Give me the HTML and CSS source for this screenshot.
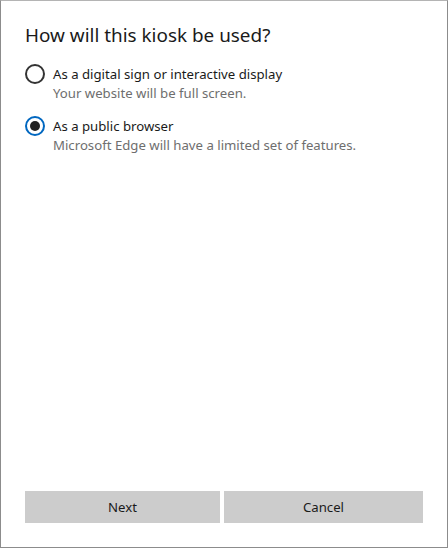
FILE: index.html
```html
<!DOCTYPE html>
<html lang="en">
<head>
<meta charset="utf-8">
<title>Kiosk</title>
<link rel="stylesheet" href="styles.css">
</head>
<body>
<div class="window">
  <h1 class="title">How will this kiosk be used?</h1>
  <div class="options">
    <label class="option">
      <span class="radio"></span>
      <span class="text">
        <span class="label">As a digital sign or interactive display</span>
        <span class="desc">Your website will be full screen.</span>
      </span>
    </label>
    <label class="option">
      <span class="radio checked"></span>
      <span class="text">
        <span class="label">As a public browser</span>
        <span class="desc">Microsoft Edge will have a limited set of features.</span>
      </span>
    </label>
  </div>
  <div class="buttons">
    <button class="btn">Next</button>
    <button class="btn">Cancel</button>
  </div>
</div>
</body>
</html>
```
FILE: styles.css
```css
html, body {
  margin: 0;
  padding: 0;
  background: #ffffff;
}
body {
  font-family: "Segoe UI", "Noto Sans", sans-serif;
  color: #1a1a1a;
}
.window {
  box-sizing: border-box;
  width: 448px;
  height: 548px;
  border: 1px solid #8c8c8c;
  border-top-color: #b4b4b4;
  padding: 20px 24px 24px 24px;
  display: flex;
  flex-direction: column;
}
.title {
  margin: 0;
  font-size: 18.9px;
  font-weight: 400;
  line-height: 28px;
}
.options {
  display: flex;
  flex-direction: column;
  gap: 13px;
  margin-top: 15px;
}
.option {
  display: flex;
  align-items: flex-start;
  gap: 8px;
}
.radio {
  box-sizing: border-box;
  flex: none;
  width: 20px;
  height: 20px;
  margin-top: 0;
  border: 2px solid #333333;
  border-radius: 50%;
  display: flex;
  align-items: center;
  justify-content: center;
}
.radio.checked {
  border-color: #0067c0;
}
.radio.checked::after {
  content: "";
  width: 10px;
  height: 10px;
  border-radius: 50%;
  background: #222222;
}
.text {
  display: flex;
  flex-direction: column;
}
.label {
  font-size: 13.2px;
  line-height: 20px;
  color: #1a1a1a;
}
.desc {
  font-size: 13.2px;
  line-height: 19px;
  color: #6e6e6e;
}
.buttons {
  margin-top: auto;
  display: grid;
  grid-template-columns: 195px 1fr;
  gap: 4px;
}
.btn {
  height: 32px;
  border: none;
  background: #cccccc;
  font-family: inherit;
  font-size: 13.2px;
  color: #1a1a1a;
  padding: 0;
}
```
